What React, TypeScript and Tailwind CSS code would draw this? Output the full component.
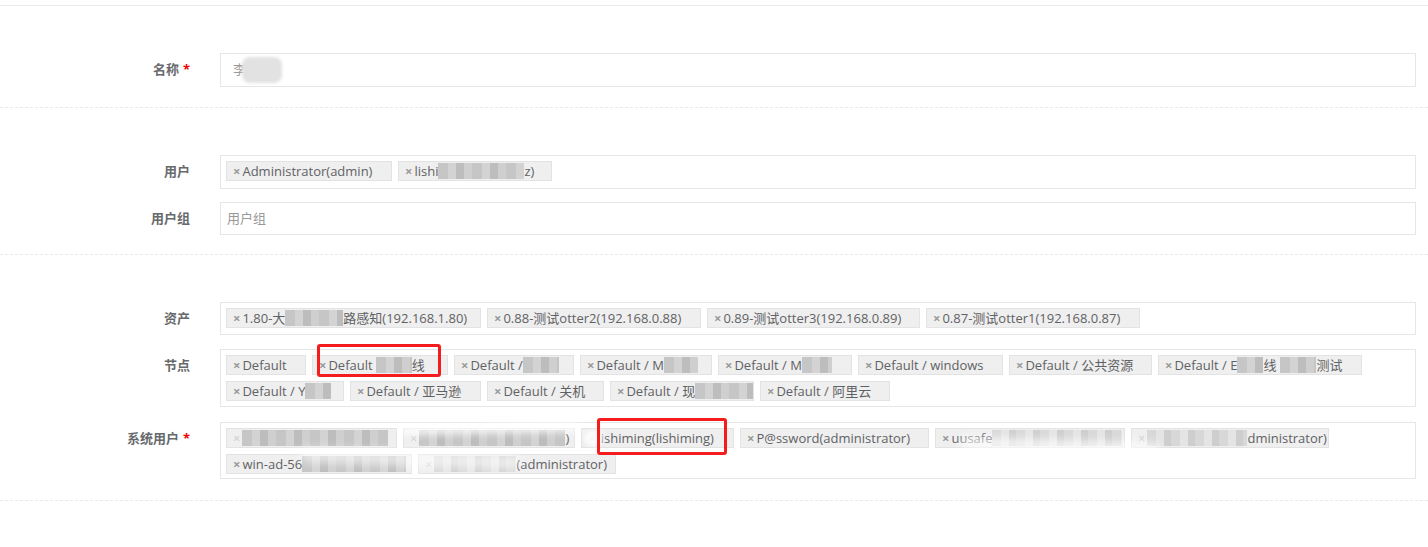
import React from "react";

type TagDef = { w: string; content: React.ReactNode; hideX?: boolean };

const Blur = ({ w, light }: { w: string; light?: boolean }) => (
  <span
    className={`inline-block h-[16px] align-middle blur-[0.6px] ${w} ${
      light
        ? "bg-[repeating-linear-gradient(90deg,#d8d8d8_0_9px,#e4e4e4_9px_17px,#cecece_17px_24px)]"
        : "bg-[repeating-linear-gradient(90deg,#c6c6c6_0_10px,#d3d3d3_10px_18px,#bdbdbd_18px_26px,#cfcfcf_26px_34px)]"
    }`}
  />
);

const Tag = ({ w, content, hideX }: TagDef) => (
  <div
    className={`flex h-[20px] shrink-0 items-center overflow-hidden whitespace-nowrap border border-[#e3e3e3] bg-[#efefef] pl-[6px] text-[13px] leading-[18px] text-[#5f6264] ${w}`}
  >
    <span className={`mr-[2px] text-[13px] font-bold leading-none text-[#9a9a9a] ${hideX ? "opacity-30" : ""}`}>×</span>
    {content}
  </div>
);

const Label = ({ text, required }: { text: string; required?: boolean }) => (
  <div className="w-[205px] shrink-0 pr-[15px] pt-[7px] text-right text-[13px] font-bold leading-[19px] text-[#676a6c]">
    {text}
    {required && <span className="ml-[4px] text-[#ed0000]">*</span>}
  </div>
);

const TagBox = ({ tags, h }: { tags: TagDef[]; h: string }) => (
  <div
    className={`ml-[15px] mr-[12px] flex flex-1 flex-wrap content-start gap-x-[6px] gap-y-[6px] border border-[#e5e6e7] bg-white px-[5px] pt-[5px] ${h}`}
  >
    {tags.map((t, i) => (
      <Tag key={i} {...t} />
    ))}
  </div>
);

const userTags: TagDef[] = [
  { w: "w-[166px]", content: "Administrator(admin)" },
  {
    w: "w-[154px]",
    content: (
      <>
        lishi
        <Blur w="w-[86px]" />
        z)
      </>
    ),
  },
];

const assetTags: TagDef[] = [
  {
    w: "w-[255px]",
    content: (
      <>
        1.80-大
        <Blur w="w-[58px]" />
        路感知(192.168.1.80)
      </>
    ),
  },
  { w: "w-[214px]", content: "0.88-测试otter2(192.168.0.88)" },
  { w: "w-[213px]", content: "0.89-测试otter3(192.168.0.89)" },
  { w: "w-[214px]", content: "0.87-测试otter1(192.168.0.87)" },
];

const nodeTags: TagDef[] = [
  { w: "w-[80px]", content: "Default" },
  {
    w: "w-[136px]",
    content: (
      <>
        Default
        <Blur w="w-[36px] ml-[3px]" />
        线
      </>
    ),
  },
  {
    w: "w-[120px]",
    content: (
      <>
        Default / <Blur w="w-[36px]" />
      </>
    ),
  },
  {
    w: "w-[132px]",
    content: (
      <>
        Default / M<Blur w="w-[34px]" />
      </>
    ),
  },
  {
    w: "w-[134px]",
    content: (
      <>
        Default / M<Blur w="w-[30px]" />
      </>
    ),
  },
  { w: "w-[145px]", content: "Default / windows" },
  { w: "w-[143px]", content: "Default / 公共资源" },
  {
    w: "w-[204px]",
    content: (
      <>
        Default / E<Blur w="w-[26px]" />
        线
        <Blur w="w-[36px] ml-[4px]" />
        测试
      </>
    ),
  },
  {
    w: "w-[118px]",
    content: (
      <>
        Default / Y<Blur w="w-[26px]" />
      </>
    ),
  },
  { w: "w-[131px]", content: "Default / 亚马逊" },
  { w: "w-[117px]", content: "Default / 关机" },
  {
    w: "w-[144px]",
    content: (
      <>
        Default / 现<Blur w="w-[58px]" />
      </>
    ),
  },
  { w: "w-[130px]", content: "Default / 阿里云" },
];

const sysTags: TagDef[] = [
  { w: "w-[171px]", hideX: true, content: <Blur w="w-[146px]" /> },
  {
    w: "w-[172px]",
    hideX: true,
    content: (
      <>
        <Blur w="w-[146px]" />)
      </>
    ),
  },
  { w: "w-[153px]", hideX: true, content: "lishiming(lishiming)" },
  { w: "w-[189px]", content: "P@ssword(administrator)" },
  {
    w: "w-[190px]",
    content: (
      <>
        uusafe
        <Blur w="w-[130px]" light />
      </>
    ),
  },
  {
    w: "w-[198px]",
    hideX: true,
    content: (
      <>
        <Blur w="w-[100px]" light />
        dministrator)
      </>
    ),
  },
  {
    w: "w-[186px]",
    content: (
      <>
        win-ad-56
        <Blur w="w-[104px]" />
      </>
    ),
  },
  {
    w: "w-[198px]",
    hideX: true,
    content: (
      <>
        <Blur w="w-[82px]" light />
        (administrator)
      </>
    ),
  },
];

export default function App() {
  return (
    <div className="relative h-[547px] w-full overflow-hidden bg-white font-['Open_Sans','Noto_Sans_CJK_SC',sans-serif] text-[13px] text-[#676a6c]">
      <div className="h-[5px]" />
      <div className="border-t border-[#e7eaec]" />
      <div className="h-[47px]" />

      {/* 名称 */}
      <div className="flex">
        <Label text="名称" required />
        <div className="ml-[15px] mr-[12px] flex h-[34px] flex-1 items-center border border-[#e5e6e7] bg-white px-[12px]">
          <span className="text-[#9a9a9a]">李</span>
          <span className="ml-[-4px] inline-block h-[26px] w-[40px] rounded-[8px] bg-[#e2e2e2] blur-[1.5px]" />
        </div>
      </div>
      <div className="h-[20px]" />
      <div className="border-t border-dashed border-[#e7eaec]" />
      <div className="h-[47px]" />

      {/* 用户 */}
      <div className="flex">
        <Label text="用户" />
        <TagBox tags={userTags} h="h-[34px]" />
      </div>
      <div className="h-[13px]" />
      <div className="flex">
        <Label text="用户组" />
        <div className="ml-[15px] mr-[12px] flex h-[33px] flex-1 items-center border border-[#e5e6e7] bg-white px-[6px] text-[#999]">
          用户组
        </div>
      </div>
      <div className="h-[19px]" />
      <div className="border-t border-dashed border-[#e7eaec]" />
      <div className="h-[47px]" />

      {/* 资产 */}
      <div className="flex">
        <Label text="资产" />
        <TagBox tags={assetTags} h="h-[33px]" />
      </div>
      <div className="h-[14px]" />
      <div className="flex">
        <Label text="节点" />
        <TagBox tags={nodeTags} h="h-[58px]" />
      </div>
      <div className="h-[15px]" />
      <div className="flex">
        <Label text="系统用户" required />
        <TagBox tags={sysTags} h="h-[57px]" />
      </div>
      <div className="h-[21px]" />
      <div className="border-t border-dashed border-[#e7eaec]" />

      {/* annotation smears */}
      <div className="pointer-events-none absolute left-[400px] top-[424px] h-[10px] w-[180px] -rotate-[1deg] rounded-full bg-white/70 blur-[3px]" />
      <div className="pointer-events-none absolute left-[584px] top-[430px] h-[16px] w-[20px] rounded-full bg-white/80 blur-[2px]" />
      <div className="pointer-events-none absolute left-[960px] top-[440px] h-[12px] w-[200px] rotate-[2deg] rounded-full bg-white/70 blur-[4px]" />
      <div className="pointer-events-none absolute left-[300px] top-[452px] h-[14px] w-[220px] rotate-[2deg] rounded-full bg-white/60 blur-[5px]" />

      {/* red annotation boxes */}
      <div className="pointer-events-none absolute left-[317px] top-[344px] h-[33px] w-[124px] rounded-[3px] border-[3px] border-[#f41c1c]" />
      <div className="pointer-events-none absolute left-[597px] top-[418px] h-[37px] w-[130px] rounded-[3px] border-[3px] border-[#f41c1c]" />
    </div>
  );
}
